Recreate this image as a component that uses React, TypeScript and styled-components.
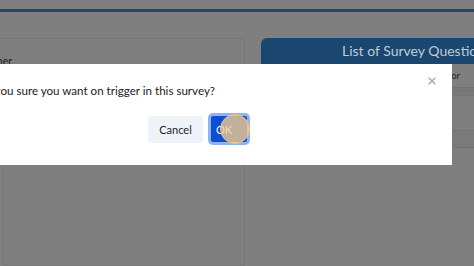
import * as React from "react"
import styled, { createGlobalStyle } from "styled-components"
import { X } from "lucide-react"

const GlobalStyle = createGlobalStyle`
  html, body {
    margin: 0;
    padding: 0;
    width: 474px;
    height: 266px;
    overflow: hidden;
    background: #7f7f7f;
    font-family: "Lato", "Liberation Sans", sans-serif;
  }
`

const Page = styled.div`
  width: 474px;
  height: 266px;
  display: flex;
  flex-direction: column;
  overflow: hidden;
`

const TopStrip = styled.div`
  height: 9px;
  flex-shrink: 0;
  border-bottom: 3px solid #24486a;
`

const Content = styled.div`
  display: flex;
  gap: 16px;
  padding-top: 26px;
`

const LeftColumn = styled.div`
  width: 244px;
  flex-shrink: 0;
  display: flex;
  flex-direction: column;
  border-top: 1px solid #747474;
  border-right: 1px solid #767676;
`

const FieldLabel = styled.div`
  margin-top: 16px;
  margin-left: -60px;
  width: 72px;
  text-align: right;
  font-size: 10.5px;
  color: #1e1e1e;
  line-height: 12px;
`

const InnerBox = styled.div`
  margin: 7px 0 0 3px;
  height: 191px;
  border-left: 1px solid #777;
  border-bottom: 1px solid #777;
`

const RightColumn = styled.div`
  flex: 1;
  display: flex;
  flex-direction: column;
  margin-right: -40px;
`

const PanelHeader = styled.div`
  height: 26px;
  background: #1b4670;
  border-radius: 6px 6px 0 0;
  color: #c3cbd3;
  font-size: 14px;
  line-height: 26px;
  padding-left: 81px;
  white-space: nowrap;
`

const Row = styled.div<{ $h: number; $bg: string }>`
  height: ${p => p.$h}px;
  background: ${p => p.$bg};
  border-bottom: 1px solid #737373;
  font-size: 9.5px;
  color: #2a2a2a;
  display: flex;
  align-items: center;
  justify-content: flex-end;
  padding-right: 54px;
`

const Modal = styled.div`
  position: fixed;
  left: -40px;
  top: 64px;
  width: 492px;
  height: 101px;
  background: #ffffff;
  box-sizing: border-box;
  padding: 20px 0 0 14px;
`

const CloseButton = styled.button`
  position: absolute;
  right: 14px;
  top: 11px;
  border: none;
  background: transparent;
  padding: 0;
  color: #9fb2c8;
  display: flex;
`

const Message = styled.p`
  margin: 0;
  font-size: 11.6px;
  color: #222;
  line-height: 14px;
  white-space: nowrap;
`

const Actions = styled.div`
  display: flex;
  align-items: center;
  gap: 5px;
  margin-top: 15px;
  padding-left: 174px;
`

const CancelButton = styled.button`
  width: 55px;
  height: 27px;
  border: none;
  border-radius: 4px;
  background: #eef3fa;
  color: #222;
  font-family: inherit;
  font-size: 11px;
`

const OkWrap = styled.div`
  position: relative;
`

const OkButton = styled.button`
  width: 42px;
  height: 32px;
  border: 3px solid #8fb2f2;
  border-radius: 5px;
  background: #0b4fd4;
  color: #ffffff;
  font-family: inherit;
  font-size: 11px;
  padding: 0 10px 0 0;
`

const ClickMark = styled.span`
  position: absolute;
  left: 12px;
  top: 1px;
  width: 28px;
  height: 28px;
  border-radius: 50%;
  background: rgba(245, 205, 140, 0.78);
  border: 1.5px solid #f2bf80;
  pointer-events: none;
`

export default function App() {
  return (
    <>
      <GlobalStyle />
      <Page>
        <TopStrip />
        <Content>
          <LeftColumn>
            <FieldLabel>Survey Owner</FieldLabel>
            <InnerBox />
          </LeftColumn>
          <RightColumn>
            <PanelHeader>List of Survey Questions</PanelHeader>
            <Row $h={23} $bg="#7f7f7f">Creator</Row>
            <Row $h={7} $bg="#777777" />
            <Row $h={34} $bg="#7f7f7f" />
            <Row $h={16} $bg="#7a7a7a" />
          </RightColumn>
        </Content>
      </Page>
      <Modal>
        <CloseButton aria-label="Close">
          <X size={12} strokeWidth={3} />
        </CloseButton>
        <Message>Are you sure you want on trigger in this survey?</Message>
        <Actions>
          <CancelButton>Cancel</CancelButton>
          <OkWrap>
            <OkButton>OK</OkButton>
            <ClickMark />
          </OkWrap>
        </Actions>
      </Modal>
    </>
  )
}
